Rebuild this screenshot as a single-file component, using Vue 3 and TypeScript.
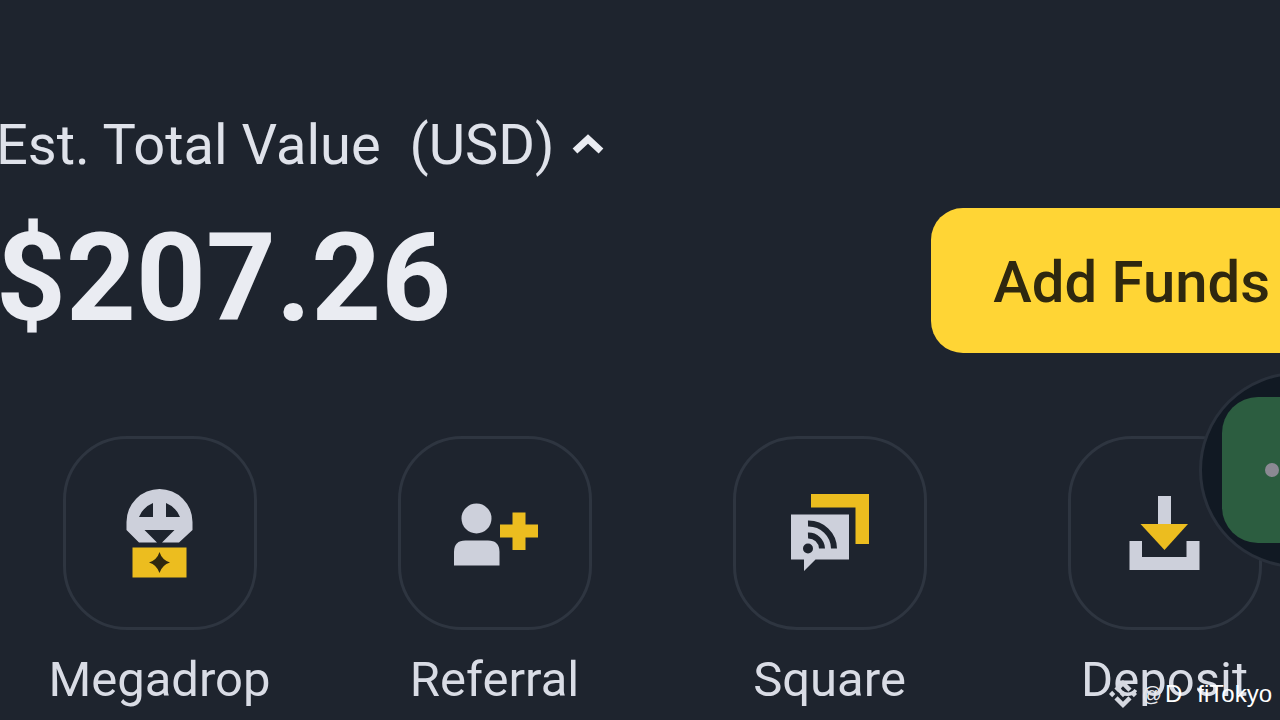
<script setup lang="ts">
import { ref } from 'vue'

type IconName = 'megadrop' | 'referral' | 'square' | 'deposit'

interface Shortcut {
  icon: IconName
  label: string
}

const shortcuts: Shortcut[] = [
  { icon: 'megadrop', label: 'Megadrop' },
  { icon: 'referral', label: 'Referral' },
  { icon: 'square', label: 'Square' },
  { icon: 'deposit', label: 'Deposit' },
]

const expanded = ref(true)
</script>

<template>
  <main class="wallet">
    <div class="content">
      <header class="summary">
        <div class="balance">
          <button class="currency" type="button" :aria-expanded="expanded" @click="expanded = !expanded">
            <span>Est. Total Value</span>
            <span class="unit">(USD)</span>
            <svg class="caret" viewBox="0 0 32 24" aria-hidden="true">
              <path d="M3 18 L16 6 L29 18" fill="none" stroke="currentColor" stroke-width="7" />
            </svg>
          </button>
          <p class="amount">$207.26</p>
        </div>
        <button class="add-funds" type="button">Add Funds</button>
      </header>

      <nav class="shortcuts">
        <a v-for="item in shortcuts" :key="item.label" class="shortcut" href="#">
          <span class="tile">
            <svg class="icon" viewBox="0 0 96 96" aria-hidden="true">
              <g v-if="item.icon === 'megadrop'">
                <path
                  class="light"
                  fill-rule="evenodd"
                  d="M14.5 45V37A33 33 0 0 1 80.500 37V45L67 57.500H50L62.500 45H32.500L45 57.500H27ZM41 18V32H27Q31 22 41 18ZM54 18V32H68Q64 22 54 18Z"
                />
                <path class="gold" d="M20.500 62.500H74.500V92.500H20.500Z" />
                <path class="ink" d="M47.500 67Q50 75 58 77.500Q50 80 47.500 88Q45 80 37 77.500Q45 75 47.500 67Z" />
              </g>
              <g v-else-if="item.icon === 'referral'">
                <circle class="light" cx="29.500" cy="33.500" r="15" />
                <path class="light" d="M7 80.500V67Q7 55.500 18.500 55.500H41Q52.500 55.500 52.500 67V80.500Z" />
                <path class="gold" d="M65.500 27.500H78.500V39.500H91V52.500H78.500V65H65.500V52.500H53V39.500H65.500Z" />
              </g>
              <g v-else-if="item.icon === 'square'">
                <path class="gold" d="M29 9H87V59H73.500V22.500H29Z" />
                <path class="light" d="M9 29.500H67V74.500H33.500L22 86V74.500H9Z" />
                <circle class="hole" cx="26" cy="63.500" r="5" />
                <path class="wave" d="M26 50.500A13.500 13.500 0 0 1 40 63.500M26 38.500A25.500 25.500 0 0 1 52 63.500" />
              </g>
              <g v-else>
                <path class="light" d="M41 11H54V40H41Z" />
                <path class="light" d="M12.500 56H25V72H69.500V56H82.500V85H12.500Z" />
                <path class="gold" d="M23.500 39H71L47.500 65Z" />
              </g>
            </svg>
          </span>
          <span class="label">{{ item.label }}</span>
        </a>
      </nav>
    </div>

    <button class="assist" type="button" aria-label="More">
      <span class="assist-face">
        <span class="dot"></span>
        <span class="dot"></span>
        <span class="dot"></span>
      </span>
    </button>

    <div class="credit">
      <svg class="credit-logo" viewBox="0 0 24 24" aria-hidden="true">
        <path
          d="M16.624 13.920l2.718 2.716-7.353 7.353-7.353-7.352 2.718-2.717 4.635 4.660 4.636-4.660zm4.637-4.636L24 12l-2.715 2.716L18.568 12l2.693-2.716zm-9.272 0l2.716 2.692-2.716 2.717L9.272 12l2.717-2.716zm-9.273 0L5.409 12l-2.692 2.692L0 12l2.716-2.716zM11.989.012l7.353 7.329-2.718 2.715-4.635-4.636-4.636 4.660-2.717-2.716 7.353-7.352z"
        />
      </svg>
      <span class="at">@</span>
      <span class="initial">D</span>
      <span>fiTokyo</span>
    </div>
  </main>
</template>

<style>
html,
body {
  margin: 0;
  background: #1e242e;
}
</style>

<style scoped>
.wallet {
  position: relative;
  min-height: 100vh;
  overflow: hidden;
  box-sizing: border-box;
  padding-top: 113px;
  background: #1e242e;
  color: #eaecf2;
  font-family: Roboto, 'Liberation Sans', sans-serif;
}

/* The sheet runs past both sides of the viewport. */
.content {
  margin: 0 -52px 0 -8px;
}

.summary {
  display: flex;
  justify-content: space-between;
  align-items: flex-end;
  height: 240px;
}

.balance {
  align-self: flex-start;
  padding-left: 4px;
}

button {
  border: 0;
  padding: 0;
  font: inherit;
  cursor: pointer;
}

.currency {
  display: flex;
  align-items: center;
  background: none;
  color: #dfe2ea;
  font-size: 56px;
  line-height: 64px;
  white-space: nowrap;
}

.unit {
  margin-left: 29px;
}

.caret {
  width: 32px;
  height: 24px;
  margin-left: 17px;
  color: #eaecf2;
}

.amount {
  margin: 28px 0 0;
  font-size: 122px;
  line-height: 148px;
  font-weight: 700;
}

.add-funds {
  box-sizing: border-box;
  height: 145px;
  padding: 2px 62px 0;
  border-radius: 32px;
  background: #ffd535;
  color: #2f280f;
  font-size: 58px;
  font-weight: 500;
  white-space: nowrap;
}

.shortcuts {
  display: grid;
  grid-template-columns: repeat(4, 1fr);
  margin-top: 83px;
}

.shortcut {
  display: flex;
  flex-direction: column;
  align-items: center;
  color: #d9dce5;
  text-decoration: none;
}

.tile {
  display: grid;
  place-items: center;
  box-sizing: border-box;
  width: 194px;
  height: 194px;
  border: 3px solid #2e3540;
  border-radius: 64px;
}

.icon {
  width: 96px;
  height: 96px;
}

.light {
  fill: #cdd0db;
}

.gold {
  fill: #ecbd1f;
}

.ink {
  fill: #2f280f;
}

.hole {
  fill: #1e242e;
}

.wave {
  fill: none;
  stroke: #1e242e;
  stroke-width: 6;
}

.label {
  margin-top: 20px;
  font-size: 49px;
  line-height: 60px;
}

.assist {
  position: absolute;
  top: 372px;
  right: -115px;
  display: grid;
  place-items: center;
  box-sizing: border-box;
  width: 196px;
  height: 196px;
  border: 3px solid #29303b;
  border-radius: 50%;
  background: #111923;
}

.assist-face {
  display: flex;
  align-items: center;
  justify-content: center;
  gap: 11px;
  width: 150px;
  height: 146px;
  border-radius: 36px;
  background: #2c5d40;
}

.dot {
  width: 14px;
  height: 14px;
  border-radius: 50%;
  background: #8b8993;
}

.credit {
  position: absolute;
  right: 8px;
  bottom: 10px;
  display: flex;
  align-items: center;
  color: #ffffff;
  font-family: 'Liberation Sans', Arial, sans-serif;
  font-size: 24px;
  line-height: 32px;
}

.credit-logo {
  width: 28px;
  height: 28px;
  margin-right: 5px;
  fill: #d5d8e0;
}

.at {
  color: #e6e8ee;
  font-size: 20px;
}

.initial {
  margin: 0 15px 0 3px;
}
</style>
